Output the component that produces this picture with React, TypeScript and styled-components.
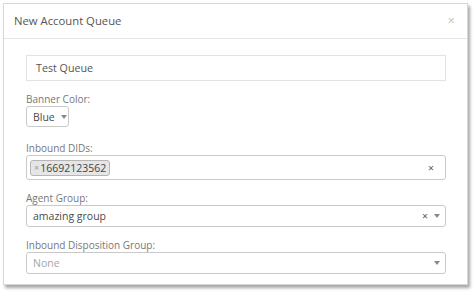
import React from "react";
import styled, { createGlobalStyle } from "styled-components";

const Global = createGlobalStyle`
  html, body { margin: 0; padding: 0; background: #fff; }
  body { font-family: "Open Sans", "Liberation Sans", sans-serif; }
  * { box-sizing: border-box; }
`;

const Page = styled.div`
  padding: 3px 0 0 3px;
  width: 474px;
  height: 294px;
`;

const Modal = styled.div`
  width: 465px;
  height: 282px;
  border: 1px solid #d8d8d8;
  background: #fff;
  box-shadow: 2px 3px 3px rgba(0, 0, 0, 0.35);
  display: flex;
  flex-direction: column;
`;

const Header = styled.div`
  height: 35px;
  border-bottom: 1px solid #e5e5e5;
  display: flex;
  align-items: center;
  justify-content: space-between;
  padding: 0 12px 2px 10px;
`;

const Title = styled.div`
  font-size: 11.3px;
  color: #555;
`;

const Close = styled.span`
  font-size: 13px;
  color: #c4c4c4;
  line-height: 1;
`;

const Body = styled.div`
  padding: 16px 21px 0 22px;
  display: flex;
  flex-direction: column;
`;

const TextInput = styled.div`
  height: 26px;
  border: 1px solid #e2e2e2;
  display: flex;
  align-items: center;
  padding-left: 9px;
  font-size: 10.7px;
  color: #555;
`;

const Label = styled.div<{ $mt: number }>`
  margin-top: ${(p) => p.$mt}px;
  font-size: 10px;
  line-height: 14px;
  color: #777;
`;

const Box = styled.div<{ $h: number; $w?: number }>`
  height: ${(p) => p.$h}px;
  width: ${(p) => (p.$w ? `${p.$w}px` : "auto")};
  border: 1px solid #c9c9c9;
  border-radius: 3px;
  display: flex;
  align-items: center;
  padding: 0 5px 0 6px;
  font-size: 10.5px;
  color: #4a4a4a;
`;

const Value = styled.span<{ $muted?: boolean }>`
  flex: 1;
  color: ${(p) => (p.$muted ? "#a5a5a5" : "#4a4a4a")};
`;

const Caret = styled.span`
  width: 0;
  height: 0;
  border-left: 3.5px solid transparent;
  border-right: 3.5px solid transparent;
  border-top: 4px solid #888;
  margin-left: 6px;
`;

const Clear = styled.span<{ $end?: boolean }>`
  font-size: 10.5px;
  color: #555;
  margin-right: ${(p) => (p.$end ? 6 : 0)}px;
`;

const Tag = styled.span`
  height: 16px;
  border: 1px solid #b5b5b5;
  border-radius: 3px;
  background: #e6e6e6;
  font-size: 10.5px;
  color: #444;
  display: inline-flex;
  align-items: center;
  padding: 0 3px 0 3px;
  margin-left: -3px;
`;

const TagX = styled.span`
  color: #999;
  font-size: 9px;
  margin-right: 1px;
`;

export default function App() {
  return (
    <>
      <Global />
      <Page>
        <Modal>
          <Header>
            <Title>New Account Queue</Title>
            <Close>×</Close>
          </Header>
          <Body>
            <TextInput>Test Queue</TextInput>
            <Label $mt={11}>Banner Color:</Label>
            <Box $h={21} $w={43}>
              <Value>Blue</Value>
              <Caret />
            </Box>
            <Label $mt={14}>Inbound DIDs:</Label>
            <Box $h={25}>
              <Value>
                <Tag>
                  <TagX>×</TagX>16692123562
                </Tag>
              </Value>
              <Clear $end>×</Clear>
            </Box>
            <Label $mt={11}>Agent Group:</Label>
            <Box $h={22}>
              <Value>amazing group</Value>
              <Clear>×</Clear>
              <Caret />
            </Box>
            <Label $mt={11}>Inbound Disposition Group:</Label>
            <Box $h={22}>
              <Value $muted>None</Value>
              <Caret />
            </Box>
          </Body>
        </Modal>
      </Page>
    </>
  );
}
